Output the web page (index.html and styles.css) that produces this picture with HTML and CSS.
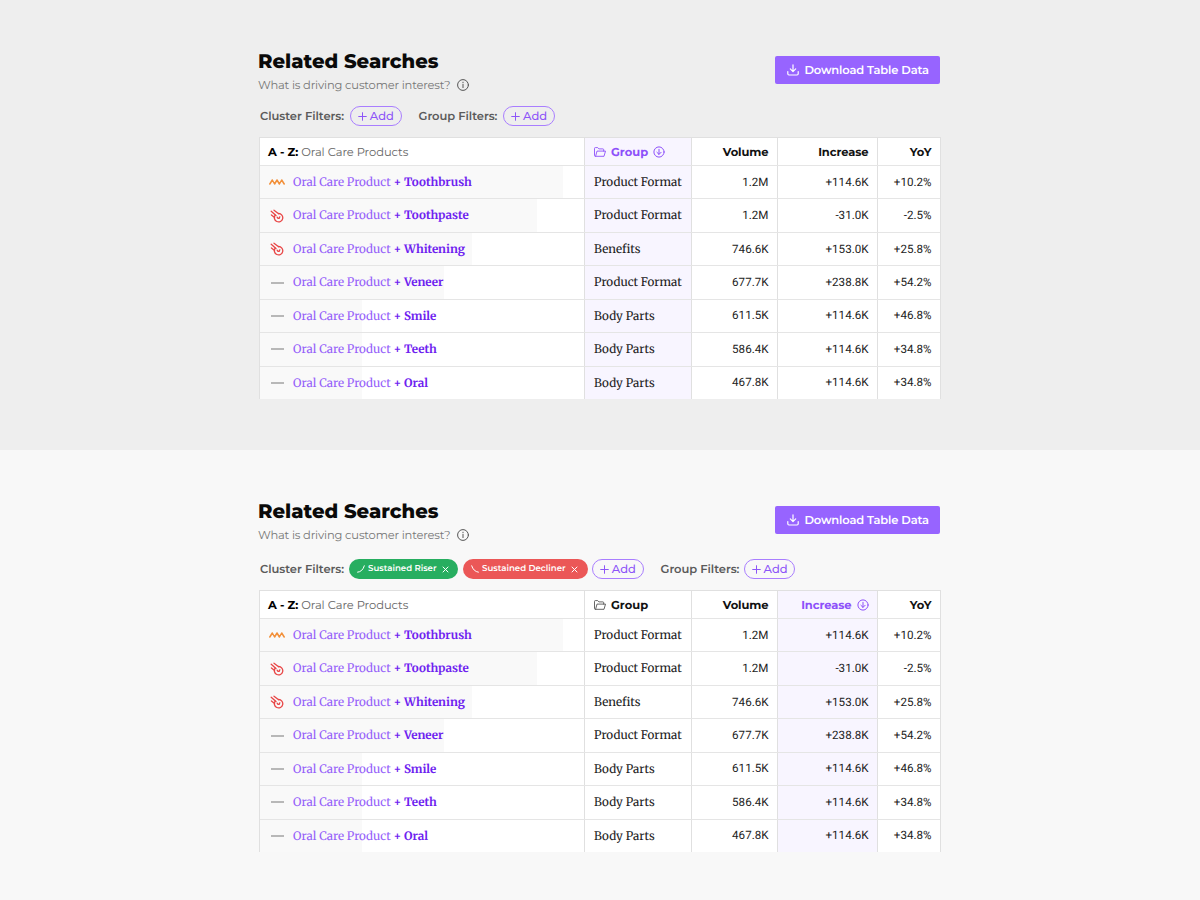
FILE: index.html
```
<!DOCTYPE html>
<html lang="en">
<head>
  <meta charset="UTF-8">
  <title>Related Searches</title>
  <link rel="stylesheet" href="styles.css">
</head>
<body>
<!-- shared icons -->
<svg class="sprite">
  <symbol id="info" viewBox="0 0 12 12"><circle cx="6" cy="6" r="5.4"/><path d="M6 5.4v3.2M6 3.2v.6"/></symbol>
  <symbol id="download" viewBox="0 0 12 12"><path d="M6 .8v6.6M3.3 4.9L6 7.6l2.7-2.7M.8 7.6v2.2q0 1.2 1.2 1.2h8q1.2 0 1.2-1.2V7.6"/></symbol>
  <symbol id="folder" viewBox="0 0 12 10"><path d="M1.6 9.3L3 4.1h8.5L10 9.3H1.3Q.5 9.3.5 8.5V1.4Q.5.6 1.3.6h2.4l1.2 1.3h4q.8 0 .8.8v1.4"/></symbol>
  <symbol id="sort" viewBox="0 0 12 12"><circle cx="6" cy="6" r="5.1"/><path d="M6 3.3v5M3.9 6.3L6 8.4l2.1-2.1"/></symbol>
  <symbol id="wave" viewBox="0 0 16 8"><path d="M.8 6L3.3 2l2.3 4L8 2l2.4 4 2.3-4 2.5 4"/></symbol>
  <symbol id="comet" viewBox="0 0 14 14"><path d="M5.2 6.2a4.2 4.2 0 1 0 3.4-1.7"/><path d="M1.2 2.2L6 6.600M4 1.200l4.600 3.500M1.400 6l3.200 2.400"/><path d="M7.200 8.200q.5 1.500 2 1.100M9.200 9.300l.6-1.500"/></symbol>
  <symbol id="rise" viewBox="0 0 8 8"><path d="M.6 7.2Q5.6 6.8 7.3.8"/></symbol>
  <symbol id="fall" viewBox="0 0 8 8"><path d="M.7.8Q2.4 6.5 7.4 7.2"/></symbol>
  <symbol id="close" viewBox="0 0 7 7"><path d="M1 1l5 5M6 1L1 6"/></symbol>
  <symbol id="plus" viewBox="0 0 9 9"><path d="M4.5.7v7.6M.7 4.5h7.6"/></symbol>
</svg>

<div class="panel">
  <div class="head">
    <div>
      <h2 class="title">Related Searches</h2>
      <div class="sub">What is driving customer interest? <svg class="info"><use href="#info"/></svg></div>
    </div>
    <div class="download"><svg><use href="#download"/></svg>Download Table Data</div>
  </div>
  <div class="filters">
    <span class="label">Cluster Filters:</span>
    <span class="add"><svg><use href="#plus"/></svg>Add</span>
    <span class="label group-label">Group Filters:</span>
    <span class="add"><svg><use href="#plus"/></svg>Add</span>
  </div>
  <div class="table by-group">
    <div class="row header">
      <div class="cell"><b>A - Z:</b>&nbsp;Oral Care Products</div>
      <div class="cell group"><svg class="folder"><use href="#folder"/></svg>Group<svg class="sort"><use href="#sort"/></svg></div>
      <div class="cell num">Volume</div>
      <div class="cell num increase">Increase</div>
      <div class="cell num">YoY</div>
    </div>
  </div>
</div>

<div class="panel light">
  <div class="head">
    <div>
      <h2 class="title">Related Searches</h2>
      <div class="sub">What is driving customer interest? <svg class="info"><use href="#info"/></svg></div>
    </div>
    <div class="download"><svg><use href="#download"/></svg>Download Table Data</div>
  </div>
  <div class="filters">
    <span class="label">Cluster Filters:</span>
    <span class="tag riser"><svg class="trend"><use href="#rise"/></svg>Sustained Riser<svg class="close"><use href="#close"/></svg></span>
    <span class="tag decliner"><svg class="trend"><use href="#fall"/></svg>Sustained Decliner<svg class="close"><use href="#close"/></svg></span>
    <span class="add"><svg><use href="#plus"/></svg>Add</span>
    <span class="label group-label">Group Filters:</span>
    <span class="add"><svg><use href="#plus"/></svg>Add</span>
  </div>
  <div class="table by-increase">
    <div class="row header">
      <div class="cell"><b>A - Z:</b>&nbsp;Oral Care Products</div>
      <div class="cell group"><svg class="folder"><use href="#folder"/></svg>Group</div>
      <div class="cell num">Volume</div>
      <div class="cell num increase">Increase<svg class="sort"><use href="#sort"/></svg></div>
      <div class="cell num">YoY</div>
    </div>
  </div>
</div>
<script src="script.js"></script>
</body>
</html>
```
FILE: styles.css
```
*{margin: 0;padding: 0;box-sizing: border-box;}
body{
  font-family: Montserrat, Inter, sans-serif;
  font-size: 11.5px;
  color: #111;
  text-rendering: geometricPrecision;
}
svg{
  fill: none;
  stroke: currentColor;
  stroke-linecap: round;
  stroke-linejoin: round;
  flex: none;
}
.sprite{
  display: none;
}
.panel{
  height: 450px;
  padding: 49px 259px 0;
  background: #eee;
}
.light{
  background: #f8f8f8;
}

/* title and download button */
.head{
  display: flex;
  justify-content: space-between;
  height: 48px;
  margin-left: -1px;
}
.title{
  font-size: 19.6px;
  line-height: 24px;
  font-weight: 800;
  color: #0a0a0a;
}
.sub{
  display: flex;
  align-items: center;
  gap: 6.5px;
  height: 24px;
  color: #777;
  letter-spacing: -0.18px;
}
.info{
  width: 12px;
  height: 12px;
  color: #555;
}
.download{
  display: flex;
  align-items: center;
  gap: 5.5px;
  width: 165px;
  height: 28px;
  margin-top: 7px;
  margin-right: 1px;
  padding-left: 12px;
  border-radius: 2px;
  background: #9764ff;
  color: #fff;
  font-weight: 600;
  letter-spacing: -0.15px;
}
.download svg{
  width: 12px;
  height: 12px;
  stroke-width: 1.2;
}

/* filters */
.filters{
  display: flex;
  align-items: center;
  height: 20px;
  margin: 9px 0 0 1px;
}
.light .filters{
  margin-top: 12px;
}
.label{
  font-weight: 600;
  color: #5a5a5a;
  letter-spacing: -0.03px;
  margin-right: 6px;
}
.group-label{
  margin-left: 17px;
}
.add{
  display: flex;
  align-items: center;
  justify-content: center;
  gap: 3px;
  width: 51.5px;
  height: 20px;
  border: 1px solid #a97eff;
  border-radius: 10px;
  color: #8d55f8;
  font-weight: 500;
}
.add svg{
  width: 9px;
  height: 9px;
}
.light .label{
  margin-right: 4.5px;
}
.tag{
  display: flex;
  align-items: center;
  width: 109.5px;
  height: 20px;
  margin-right: 4.5px;
  padding-left: 8px;
  border-radius: 10px;
  background: #27ae60;
  color: #fff;
  font-size: 8.6px;
  font-weight: 600;
}
.decliner{
  width: 125px;
  background: #eb5757;
}
.trend{
  width: 8px;
  height: 8px;
  margin-right: 3.5px;
}
.close{
  width: 7px;
  height: 7px;
  margin-left: 5px;
}

/* table */
.table{
  margin-top: 11px;
  border: 1px solid #e0e0e0;
  border-bottom: 0;
  background: #fff;
}
.row{
  display: grid;
  grid-template-columns: 324px 107px 86px 100px 1fr;
  height: 33.45px;
  border-top: 1px solid #e5e5e5;
}
.header{
  height: 27px;
  border-top: 0;
  font-weight: 700;
}
.cell{
  display: flex;
  align-items: center;
  padding: 0 9px;
  border-left: 1px solid #e0e0e0;
}
.cell:first-child{
  border-left: 0;
  padding: 0 8px;
}
.header .cell:first-child{
  font-weight: 400;
  color: #666;
  letter-spacing: -0.05px;
}
.header b{
  color: #000;
}
.num{
  justify-content: flex-end;
  padding: 0 8.5px 0 0;
}
.header .num{
  letter-spacing: -0.08px;
}
.row:not(.header) .num{
  padding-bottom: 1px;
  font-family: Roboto, sans-serif;
  font-size: 11.6px;
  color: #222;
}
.row:not(.header) .group{
  padding-top: 1.5px;
  font-family: Merriweather, "Noto Serif", serif;
  font-size: 11.65px;
  color: #222;
}
.by-group .group, .by-increase .increase{
  background: #f8f5ff;
}
.by-group .header .group, .by-increase .header .increase{
  color: #8d50fa;
}
.folder{
  width: 12px;
  height: 10px;
  margin-right: 5px;
  stroke-width: .9;
}
.by-increase .folder{
  color: #555;
}
.sort{
  width: 12px;
  height: 12px;
  margin-left: 5px;
}

/* keyword cell with its volume bar */
.cell.keyword{
  padding: 0;
  font-family: Merriweather, "Noto Serif", serif;
  font-size: 11.6px;
  color: #9560fa;
  white-space: nowrap;
}
.bar{
  display: flex;
  align-items: center;
  height: 100%;
  padding-left: 8.5px;
  background: #f9f9f9;
}
.text{
  padding-top: 1.5px;
}
.keyword b{
  font-weight: 700;
  color: #6e22f0;
}
.icon{
  display: flex;
  align-items: center;
  justify-content: center;
  flex: none;
  width: 17px;
  margin-right: 7.5px;
}
.wave{
  width: 16px;
  height: 8px;
  color: #f2903a;
  stroke-width: 1.5;
}
.comet{
  width: 14px;
  height: 14px;
  color: #e84545;
  stroke-width: 1.3;
}
.dash{
  width: 13px;
  height: 2px;
  background: #b8b8b8;
}
```
FILE: script.js
```
// name, icon, bar width, group, volume, increase, yoy
var rows = [
  ['Toothbrush','wave',303,'Product Format','1.2M','+114.6K','+10.2%'],
  ['Toothpaste','comet',277,'Product Format','1.2M','-31.0K','-2.5%'],
  ['Whitening','comet',212,'Benefits','746.6K','+153.0K','+25.8%'],
  ['Veneer','dash',184,'Product Format','677.7K','+238.8K','+54.2%'],
  ['Smile','dash',102,'Body Parts','611.5K','+114.6K','+46.8%'],
  ['Teeth','dash',102,'Body Parts','586.4K','+114.6K','+34.8%'],
  ['Oral','dash',102,'Body Parts','467.8K','+114.6K','+34.8%']
];

function icon(name){
  if (name == 'dash') return '<i class="dash"></i>';
  return '<svg class="' + name + '"><use href="#' + name + '"/></svg>';
}

var html = '';
rows.forEach(function(r){
  html += '<div class="row">'
    + '<div class="cell keyword"><div class="bar" style="width:' + r[2] + 'px"><span class="icon">' + icon(r[1]) + '</span>'
    + '<span class="text">Oral Care Product <b>+ ' + r[0] + '</b></span></div></div>'
    + '<div class="cell group">' + r[3] + '</div>'
    + '<div class="cell num">' + r[4] + '</div>'
    + '<div class="cell num increase">' + r[5] + '</div>'
    + '<div class="cell num">' + r[6] + '</div></div>';
});

var tables = document.getElementsByClassName('table');
for (var i = 0; i < tables.length; i++){
  tables[i].insertAdjacentHTML('beforeend', html);
}
```
